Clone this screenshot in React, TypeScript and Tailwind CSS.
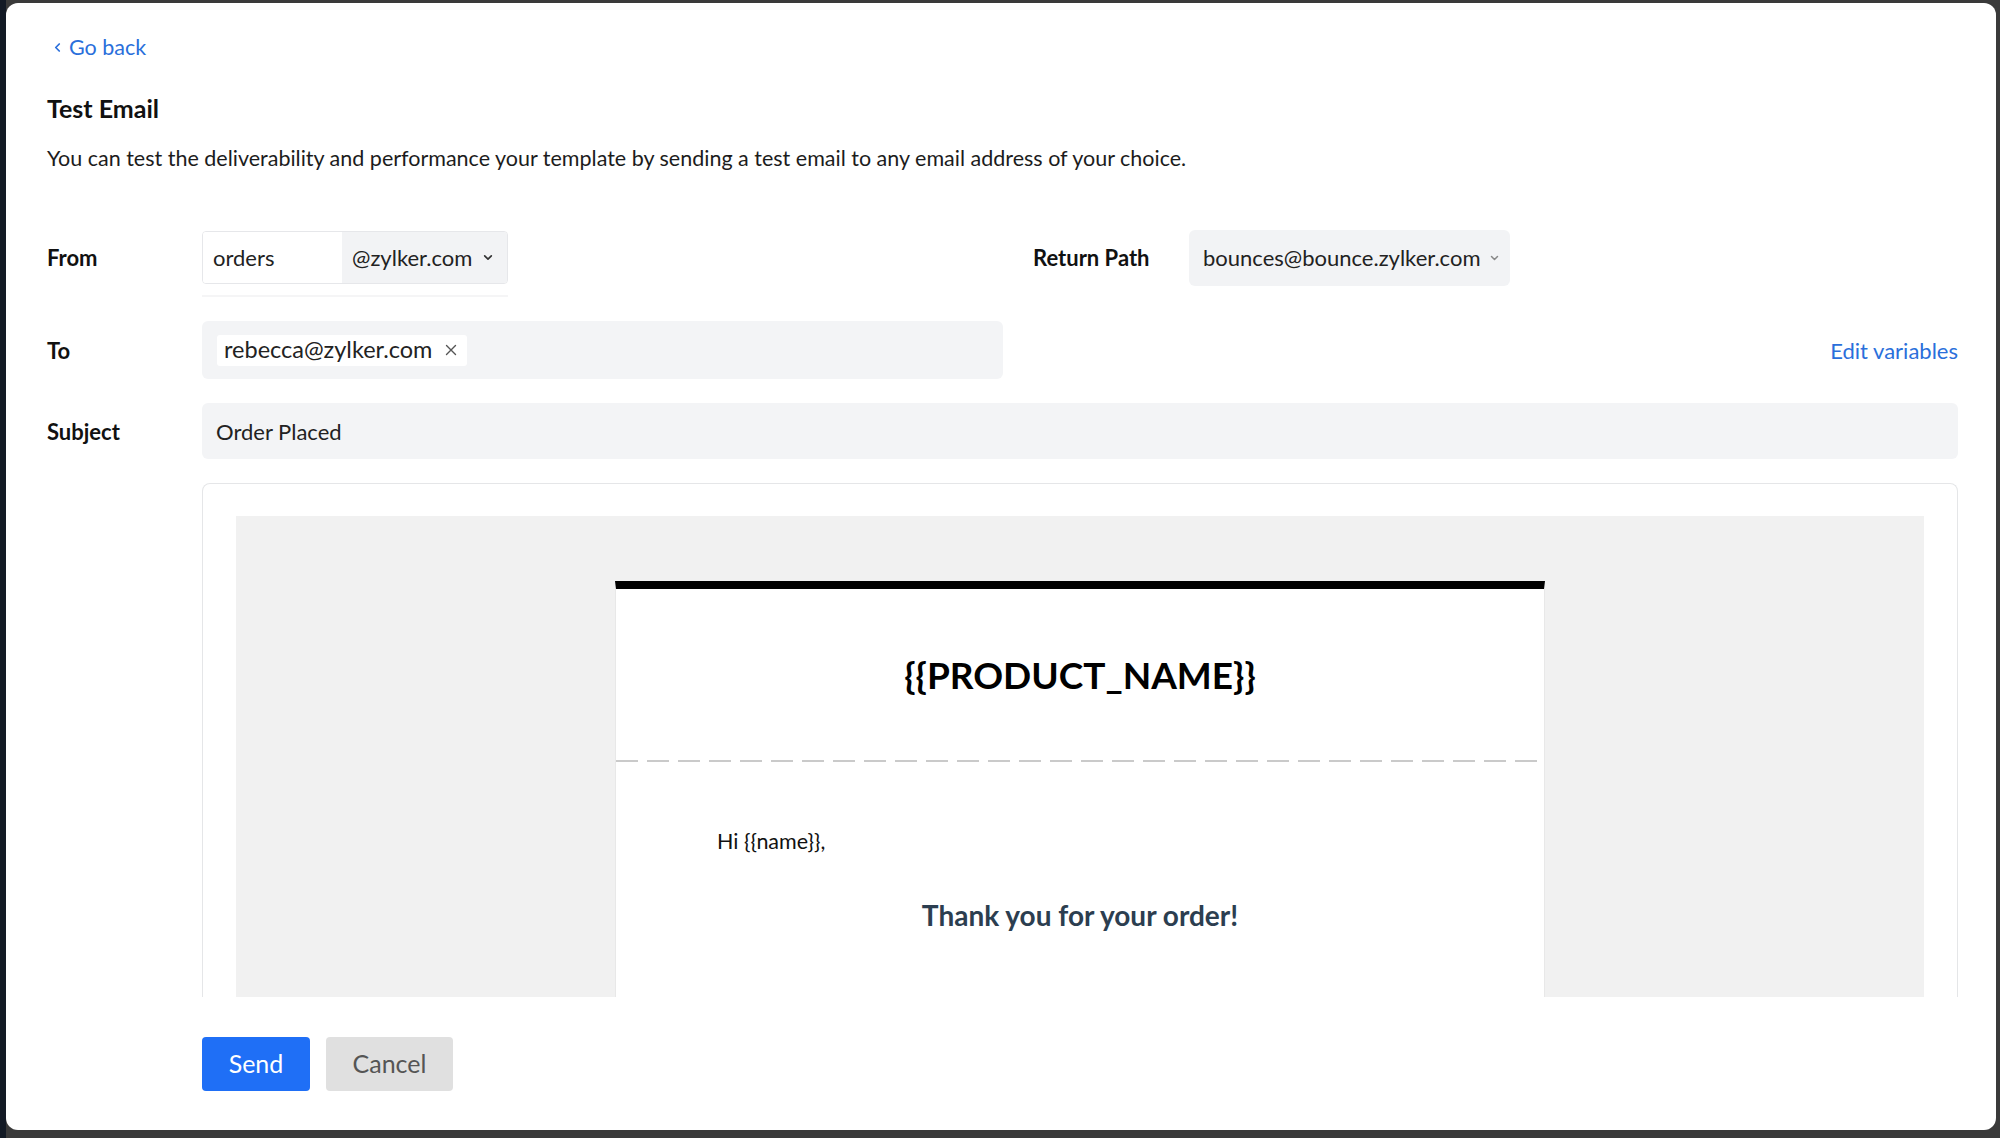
import React from "react";

function ChevronDown({ className }: { className?: string }) {
  return (
    <svg viewBox="0 0 12 8" className={className} fill="none" stroke="currentColor" strokeWidth="2" strokeLinecap="round" strokeLinejoin="round">
      <path d="M2 2l4 4 4-4" />
    </svg>
  );
}

export default function App() {
  return (
    <div className="w-[2000px] h-[1138px] bg-[#3a3a3a] flex font-['Lato','Noto_Sans',sans-serif] overflow-hidden">
      <div className="w-[6px] bg-[#131a25]" />
      <div className="flex-1 pt-[3px] pr-[4px] pb-[8px]">
        <div className="h-full bg-white rounded-[12px] pl-[41px] pr-[38px] pt-[31px] flex flex-col">
          {/* Go back */}
          <div className="h-[26px] flex items-center pl-[7px] text-[21.5px] text-[#2a6fdb]">
            <svg viewBox="0 0 8 12" className="w-[7px] h-[11px]" fill="none" stroke="currentColor" strokeWidth="2" strokeLinecap="round" strokeLinejoin="round">
              <path d="M6 2L2 6l4 4" />
            </svg>
            <span className="ml-[8px] leading-[26px]">Go back</span>
          </div>

          {/* Title */}
          <div className="mt-[33px] h-[30px] leading-[30px] text-[25px] font-bold text-[#111]">Test Email</div>

          {/* Description */}
          <div className="mt-[22px] h-[26px] leading-[26px] text-[21.5px] text-[#1c1c1c]">
            You can test the deliverability and performance your template by sending a test email to any email address of your choice.
          </div>

          {/* From row */}
          <div className="mt-[60px] flex items-center h-[53px]">
            <div className="w-[155px] text-[22px] font-bold text-[#111]">From</div>
            <div className="w-[801px] relative">
              <div className="w-[306px] h-[53px] border border-[#e6e7ea] rounded-[4px] flex overflow-hidden text-[22px] text-[#222]">
                <div className="w-[139px] pl-[10px] flex items-center bg-white">orders</div>
                <div className="flex-1 bg-[#f2f3f5] pl-[10px] flex items-center">
                  <span>@zylker.com</span>
                  <ChevronDown className="ml-[11px] w-[10px] h-[7px] text-[#333]" />
                </div>
              </div>
              <div className="absolute left-0 top-[64px] w-[306px] h-[2px] bg-[#f5f5f6]" />
            </div>
            <div className="ml-[30px] w-[156px] text-[22px] font-bold text-[#111]">Return Path</div>
            <div className="w-[321px] h-[56px] bg-[#f2f3f5] rounded-[6px] pl-[14px] flex items-center text-[22px] text-[#222]">
              <span>bounces@bounce.zylker.com</span>
              <ChevronDown className="ml-[10px] w-[9px] h-[6px] text-[#888]" />
            </div>
          </div>

          {/* To row */}
          <div className="mt-[37px] flex items-center h-[58px]">
            <div className="w-[155px] text-[22px] font-bold text-[#111]">To</div>
            <div className="w-[801px] h-[58px] bg-[#f3f4f6] rounded-[6px] pl-[15px] flex items-center">
              <div className="h-[31px] bg-white rounded-[3px] pl-[7px] pr-[10px] flex items-center text-[23.5px] text-[#222]">
                <span>rebecca@zylker.com</span>
                <svg viewBox="0 0 12 12" className="ml-[13px] w-[12px] h-[12px] text-[#555]" fill="none" stroke="currentColor" strokeWidth="1.4" strokeLinecap="round">
                  <path d="M1.5 1.5l9 9M10.5 1.5l-9 9" />
                </svg>
              </div>
            </div>
            <div className="ml-auto text-[22px] text-[#2a6fdb]">Edit variables</div>
          </div>

          {/* Subject row */}
          <div className="mt-[24px] flex items-center h-[56px]">
            <div className="w-[155px] text-[22px] font-bold text-[#111]">Subject</div>
            <div className="flex-1 h-[56px] bg-[#f3f4f6] rounded-[6px] pl-[14px] flex items-center text-[22px] text-[#222]">
              Order Placed
            </div>
          </div>

          {/* Preview */}
          <div className="mt-[24px] ml-[155px] h-[514px] border-x border-t border-[#e5e6e8] rounded-t-[8px] pt-[32px] px-[33px] overflow-hidden">
            <div className="h-full bg-[#f1f1f1] overflow-hidden pt-[65px]">
              <div className="w-[930px] mx-auto bg-white border-t-[8px] border-black border-x border-x-[#e8e8e8] h-[600px]">
                <div className="h-[171px] flex items-center justify-center text-[37px] font-bold text-black">
                  {"{{PRODUCT_NAME}}"}
                </div>
                <div className="h-[2px] bg-[repeating-linear-gradient(to_right,#cacaca_0,#cacaca_22px,transparent_22px,transparent_31px)]" />
                <div className="mt-[66px] pl-[101px] h-[26px] leading-[26px] text-[21.5px] text-[#111]">
                  {"Hi {{name}},"}
                </div>
                <div className="mt-[44px] h-[34px] leading-[34px] text-center text-[28px] font-bold text-[#2c3e50]">
                  Thank you for your order!
                </div>
              </div>
            </div>
          </div>

          {/* Buttons */}
          <div className="mt-[40px] ml-[155px] flex items-center gap-[16px]">
            <button className="w-[108px] h-[54px] bg-[#1f6ff6] rounded-[4px] text-white text-[25px]">Send</button>
            <button className="w-[127px] h-[54px] bg-[#e0e0e0] rounded-[4px] text-[#555] text-[25px]">Cancel</button>
          </div>
        </div>
      </div>
    </div>
  );
}
